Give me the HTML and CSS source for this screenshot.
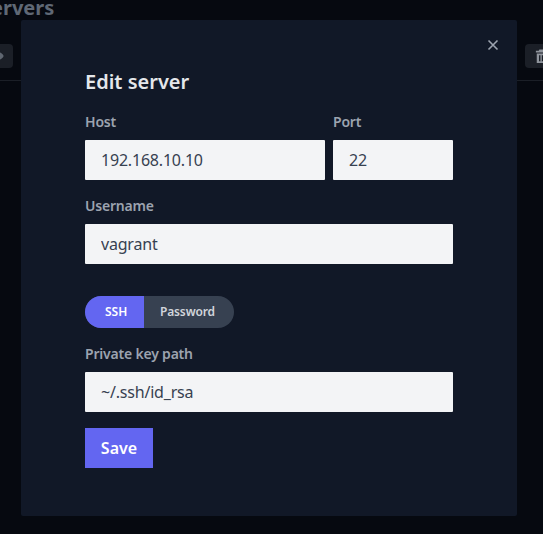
FILE: index.html
```html
<!DOCTYPE html>
<html lang="en">
<head>
<meta charset="utf-8">
<title>Edit server</title>
<link rel="stylesheet" href="styles.css">
</head>
<body>
<div class="backdrop">
  <h1 class="page-title">Servers</h1>
  <div class="toolbar">
    <div class="tool tool-left"><span class="tool-dot"></span></div>
    <div class="tool tool-right">
      <svg class="trash" viewBox="0 0 16 18" width="14" height="16"><path fill="#8f949c" d="M5 1.5h6l.7 1.5H15v2H1V3h3.3zM2 6h12v11H2zm2.6 2v7h1.6V8zm3.2 0v7h1.6V8zm3 0v7h1.4V8z" fill-rule="evenodd"/></svg>
    </div>
  </div>
  <div class="divider"></div>
</div>
<main class="modal">
  <button class="close" aria-label="Close">
    <svg viewBox="0 0 12 12" width="12" height="12"><path d="M1.5 1.5l9 9M10.5 1.5l-9 9" stroke="#9ca3af" stroke-width="1.6" fill="none"/></svg>
  </button>
  <h2 class="modal-title">Edit server</h2>
  <div class="row">
    <div class="field host"><label class="label">Host</label><input class="input" value="192.168.10.10"></div>
    <div class="field port"><label class="label">Port</label><input class="input" value="22"></div>
  </div>
  <div class="field"><label class="label">Username</label><input class="input" value="vagrant"></div>
  <div class="toggle">
    <span class="toggle-item active">SSH</span>
    <span class="toggle-item">Password</span>
  </div>
  <div class="field"><label class="label">Private key path</label><input class="input" value="~/.ssh/id_rsa"></div>
  <button class="save">Save</button>
</main>
</body>
</html>
```
FILE: styles.css
```css
* { box-sizing: border-box; }
html, body { margin: 0; height: 100%; }
body {
  background: #060910;
  font-family: "Noto Sans", sans-serif;
  overflow: hidden;
  position: relative;
}
.backdrop { height: 534px; overflow: hidden; }
.page-title {
  margin: -6px 0 0 -20px;
  font-size: 20px;
  line-height: 28px;
  font-weight: 700;
  color: #5f6875;
}
.toolbar {
  display: flex;
  justify-content: space-between;
  margin: 22px 0 0 0;
  height: 24px;
}
.tool { background: #1b1f27; border-radius: 4px; width: 40px; height: 24px; display: flex; align-items: center; }
.tool-left { margin-left: -27px; justify-content: flex-end; padding-right: 10px; }
.tool-dot { width: 6px; height: 6px; background: #5f6670; border-radius: 2px; transform: rotate(45deg); }
.tool-right { margin-right: -22px; padding-left: 10px; }
.trash { display: block; }
.divider { height: 1px; background: #1b1f27; margin-top: 12px; }
.modal {
  position: absolute;
  left: 21px;
  top: 20px;
  width: 496px;
  height: 496px;
  padding: 48px 64px;
  background: #111827;
  border-radius: 2px;
}
.close {
  position: absolute;
  top: 19px;
  right: 18px;
  padding: 0;
  width: 12px;
  height: 12px;
  border: 0;
  background: none;
  display: block;
}
.close svg { display: block; }
.modal-title {
  margin: 0 0 16px;
  font-size: 20px;
  line-height: 28px;
  font-weight: 600;
  color: #e5e7eb;
}
.row { display: flex; gap: 8px; }
.host { width: 240px; }
.port { width: 120px; }
.field { margin-bottom: 16px; }
.label {
  display: block;
  font-size: 14px;
  line-height: 20px;
  font-weight: 600;
  letter-spacing: -0.2px;
  color: #9ca3af;
  margin-bottom: 8px;
}
.input {
  display: block;
  width: 100%;
  height: 40px;
  padding: 0 16px;
  border: 0;
  border-radius: 1px;
  background: #f3f4f6;
  color: #374151;
  font: 16px/24px "Noto Sans", sans-serif;
  letter-spacing: -0.2px;
  outline: none;
}
.toggle {
  display: flex;
  width: 149px;
  height: 32px;
  margin-top: 32px;
  margin-bottom: 16px;
  border-radius: 16px;
  overflow: hidden;
  background: #374151;
}
.toggle-item {
  display: flex;
  align-items: center;
  padding: 0 0 2px 16px;
  font-size: 12px;
  font-weight: 600;
  letter-spacing: -0.15px;
  color: #d1d5db;
}
.toggle-item.active { width: 59px; padding-left: 20px; background: #6366f1; color: #fff; letter-spacing: 0; }
.save {
  display: block;
  width: 68px;
  height: 40px;
  padding: 0;
  border: 0;
  border-radius: 0;
  background: #6366f1;
  color: #fff;
  font: 600 16px/24px "Noto Sans", sans-serif;
}
```
